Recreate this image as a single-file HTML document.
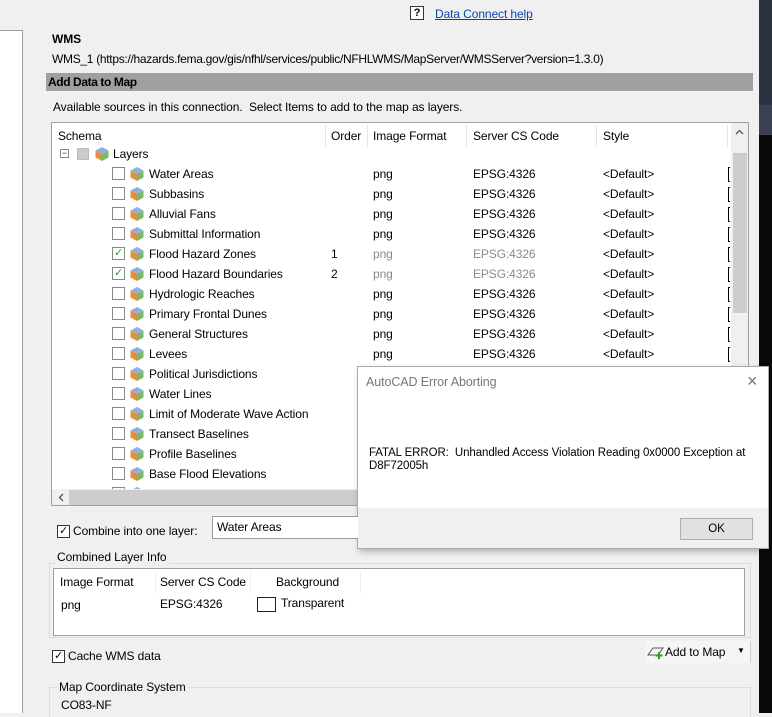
<!DOCTYPE html>
<html><head><meta charset="utf-8"><style>
*{box-sizing:border-box;margin:0;padding:0}
body{width:772px;height:713px;overflow:hidden;background:#f0f0f0;font-family:"Liberation Sans",Arial,sans-serif;font-size:12px;color:#000;position:relative;letter-spacing:-0.1px}
.a{position:absolute;white-space:nowrap}
.cb{position:absolute;width:13px;height:13px;border:1px solid #333;background:#fff}
.cbg{border-color:#888}
.row{position:absolute;left:0;height:20px;width:680px}
.row span{position:absolute;top:3px}
.gray{color:#8a8a8a}
</style></head><body>
<div class="a" style="left:0;top:30px;width:23px;height:683px;background:#fff;border-right:1px solid #a0a0a0;border-top:1px solid #a0a0a0"></div>
<div class="a" style="left:759px;top:0;width:13px;height:713px;background:#0a0a0a"></div>
<div class="a" style="left:759px;top:0;width:13px;height:105px;background:#2c3240"></div>
<div class="a" style="left:759px;top:105px;width:13px;height:30px;background:#3b4150"></div>

<div class="a" style="left:410px;top:6px;width:14px;height:14px;border:1px solid #333;background:#fff;font-size:11px;text-align:center;line-height:12px;font-weight:bold">?</div>
<div class="a" style="left:435px;top:7px;color:#0645ad;text-decoration:underline">Data Connect help</div>

<div class="a" style="left:52px;top:32px;font-weight:bold;font-size:12px">WMS</div>
<div class="a" style="left:52px;top:52px;font-size:12px;letter-spacing:-0.3px">WMS_1 (https://hazards.fema.gov/gis/nfhl/services/public/NFHLWMS/MapServer/WMSServer?version=1.3.0)</div>
<div class="a" style="left:46px;top:73px;width:707px;height:18px;background:#a0a0a0"></div>
<div class="a" style="left:48px;top:75px;font-weight:bold;font-size:12px;letter-spacing:-0.4px">Add Data to Map</div>
<div class="a" style="left:53px;top:100px">Available sources in this connection.&nbsp; Select Items to add to the map as layers.</div>

<div class="a" style="left:51px;top:122px;width:698px;height:384px;background:#fff;border:1px solid #a0a0a0;overflow:hidden">
  <div class="a" style="left:6px;top:6px">Schema</div>
  <div class="a" style="left:273px;top:2px;width:1px;height:22px;background:#e5e5e5"></div>
  <div class="a" style="left:279px;top:6px">Order</div>
  <div class="a" style="left:315px;top:2px;width:1px;height:22px;background:#e5e5e5"></div>
  <div class="a" style="left:321px;top:6px">Image Format</div>
  <div class="a" style="left:414px;top:2px;width:1px;height:22px;background:#e5e5e5"></div>
  <div class="a" style="left:421px;top:6px">Server CS Code</div>
  <div class="a" style="left:544px;top:2px;width:1px;height:22px;background:#e5e5e5"></div>
  <div class="a" style="left:551px;top:6px">Style</div>
  <div class="a" style="left:675px;top:2px;width:1px;height:22px;background:#e5e5e5"></div>
  <div id="rows"></div>
  <div class="a" style="left:679px;top:0;width:17px;height:366px;background:#f0f0f0"></div>
  <svg class="a" style="left:683px;top:6px" width="9" height="6" viewBox="0 0 9 6"><path d="M1 5L4.5 1.5L8 5" fill="none" stroke="#555" stroke-width="1.3"/></svg>
  <div class="a" style="left:681px;top:30px;width:14px;height:160px;background:#cdcdcd"></div>
  <div class="a" style="left:0;top:366px;width:696px;height:16px;background:#f0f0f0"></div>
  <div class="a" style="left:17px;top:367px;width:660px;height:15px;background:#cdcdcd"></div>
  <svg class="a" style="left:6px;top:370px" width="6" height="9" viewBox="0 0 6 9"><path d="M5 1L1.5 4.5L5 8" fill="none" stroke="#555" stroke-width="1.3"/></svg>
</div>

<div class="a" style="left:357px;top:366px;width:412px;height:183px;background:#fff;border:1px solid #aaa;box-shadow:2px 3px 6px rgba(0,0,0,.25)">
  <div class="a" style="left:8px;top:8px;color:#777;font-size:12.5px">AutoCAD Error Aborting</div>
  <div class="a" style="left:389px;top:4px;color:#777;font-size:18px;font-weight:200">&#215;</div>
  <div class="a" style="left:11px;top:80px;font-size:11.5px;line-height:13px">FATAL ERROR:&nbsp; Unhandled Access Violation Reading 0x0000 Exception at<br>D8F72005h</div>
  <div class="a" style="left:0;top:141px;width:410px;height:40px;background:#f0f0f0"></div>
  <div class="a" style="left:322px;top:151px;width:73px;height:22px;background:#e1e1e1;border:1px solid #adadad;text-align:center;line-height:20px;font-size:11.5px">OK</div>
</div>

<div class="cb" style="left:57px;top:525px;font-size:11px;line-height:11px;text-align:center">&#10003;</div>
<div class="a" style="left:73px;top:524px">Combine into one layer:</div>
<div class="a" style="left:212px;top:516px;width:146px;height:23px;background:#fff;border:1px solid #999;border-right:none"></div>
<div class="a" style="left:217px;top:520px">Water Areas</div>

<div class="a" style="left:49px;top:563px;width:702px;height:75px;border:1px solid #dcdcdc"></div>
<div class="a" style="left:55px;top:550px;background:#f0f0f0;padding:0 2px">Combined Layer Info</div>
<div class="a" style="left:53px;top:568px;width:692px;height:68px;background:#fff;border:1px solid #a0a0a0"></div>
<div class="a" style="left:60px;top:575px">Image Format</div>
<div class="a" style="left:155px;top:571px;width:1px;height:22px;background:#eee"></div>
<div class="a" style="left:160px;top:575px">Server CS Code</div>
<div class="a" style="left:250px;top:571px;width:1px;height:22px;background:#eee"></div>
<div class="a" style="left:276px;top:575px">Background</div>
<div class="a" style="left:360px;top:571px;width:1px;height:22px;background:#eee"></div>
<div class="a" style="left:61px;top:598px">png</div>
<div class="a" style="left:160px;top:597px">EPSG:4326</div>
<div class="a" style="left:257px;top:597px;width:19px;height:15px;border:1px solid #222;background:#fff"></div>
<div class="a" style="left:281px;top:596px">Transparent</div>

<div class="cb" style="left:52px;top:650px;font-size:11px;line-height:11px;text-align:center">&#10003;</div>
<div class="a" style="left:68px;top:649px">Cache WMS data</div>
<div class="a" style="left:645px;top:641px;width:106px;height:22px;border-right:1px solid #ccc;background:#f5f5f5"></div>
<svg class="a" style="left:647px;top:644px" width="18" height="16" viewBox="0 0 18 16"><path d="M1 11 L6 4 L16 4 L11 11 Z" fill="none" stroke="#555" stroke-width="1"/><path d="M12 8v7M8.5 11.5h7" stroke="#2a9a2a" stroke-width="2"/></svg>
<div class="a" style="left:665px;top:645px">Add to Map</div>
<div class="a" style="left:737px;top:646px;font-size:8px">&#9660;</div>

<div class="a" style="left:49px;top:687px;width:702px;height:30px;border:1px solid #dcdcdc;border-bottom:none"></div>
<div class="a" style="left:57px;top:680px;background:#f0f0f0;padding:0 2px">Map Coordinate System</div>
<div class="a" style="left:61px;top:698px">CO83-NF</div>

<script>
var names=["Water Areas","Subbasins","Alluvial Fans","Submittal Information","Flood Hazard Zones","Flood Hazard Boundaries","Hydrologic Reaches","Primary Frontal Dunes","General Structures","Levees","Political Jurisdictions","Water Lines","Limit of Moderate Wave Action","Transect Baselines","Profile Baselines","Base Flood Elevations",""];
var cube='<svg width="16" height="16" viewBox="0 0 16 16"><path d="M8 1L14.5 4.5L8 8L1.5 4.5Z" fill="#8fb0d8"/><path d="M1.5 4.5L8 8L8 15L1.5 11.5Z" fill="#e0913a"/><path d="M14.5 4.5L8 8L8 15L14.5 11.5Z" fill="#7bb86a"/></svg>';
var h='<div class="row" style="top:21px"><div class="a" style="left:8px;top:5px;width:9px;height:9px;border:1px solid #888;font-size:9px;line-height:7px;text-align:center;color:#333">&minus;</div><div class="a" style="left:25px;top:4px;width:12px;height:12px;background:#ccc;border:1px solid #bbb"></div><div class="a" style="left:42px;top:2px">'+cube+'</div><span style="left:61px">Layers</span></div>';
for(var i=0;i<names.length;i++){
 var t=41+i*20,chk=(i==4||i==5),n=names[i];
 h+='<div class="row" style="top:'+t+'px"><div class="cb cbg" style="left:60px;top:3px;font-size:11px;line-height:11px;text-align:center;color:#2a9a2a">'+(chk?'&#10003;':'')+'</div><div class="a" style="left:77px;top:2px">'+cube+'</div><span style="left:97px">'+n+'</span>';
 if(n&&i<10){h+='<span style="left:321px" class="'+(chk?'gray':'')+'">png</span><span style="left:421px" class="'+(chk?'gray':'')+'">EPSG:4326</span><span style="left:551px">&lt;Default&gt;</span><div class="a" style="left:676px;top:3px;width:2px;height:15px;border-left:1px solid #000;border-top:1px solid #000;border-bottom:1px solid #000"></div>';}
 if(chk)h+='<span style="left:279px">'+(i-3)+'</span>';
 h+='</div>';
}
document.getElementById('rows').innerHTML=h;
</script>
</body></html>
